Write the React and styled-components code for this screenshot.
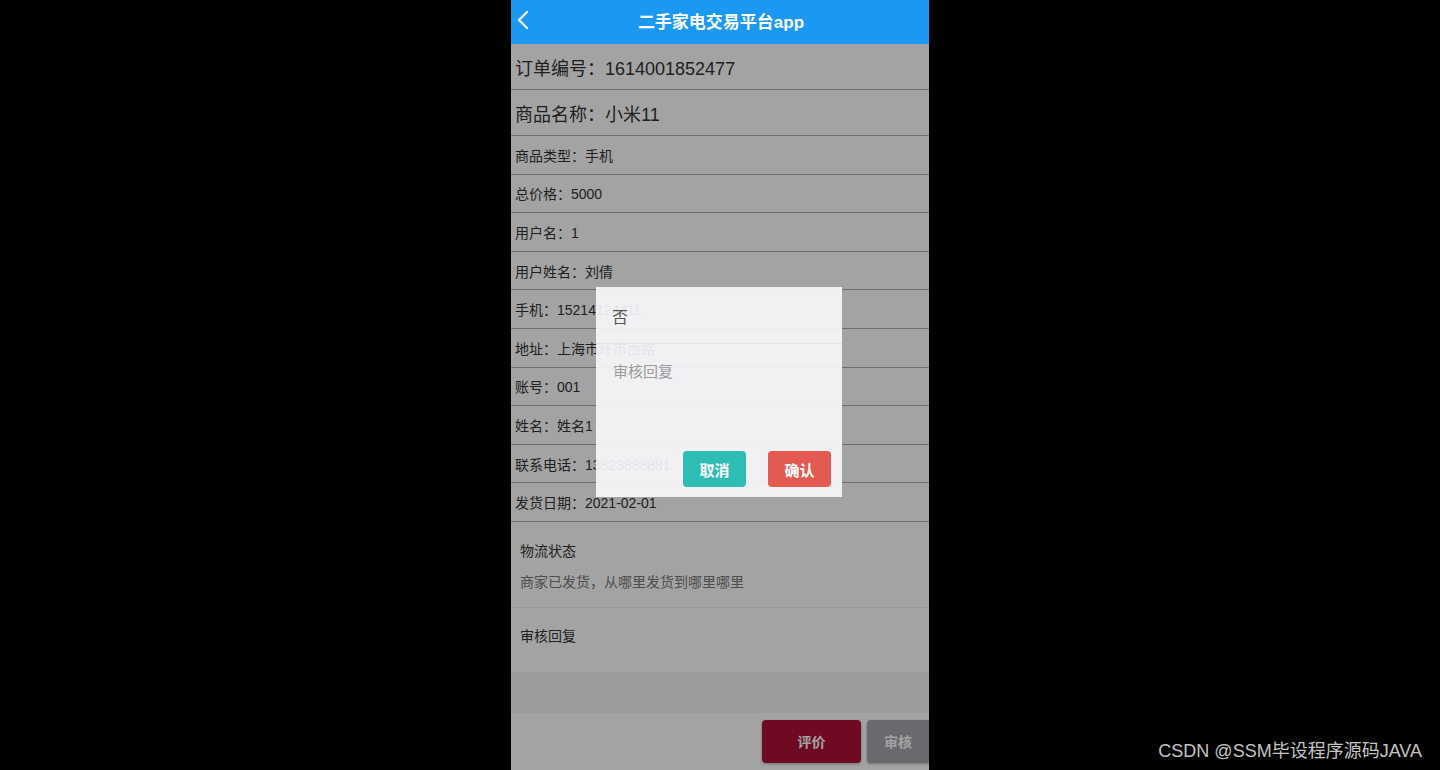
import React from 'react'
import styled, { createGlobalStyle } from 'styled-components'

const GlobalStyle = createGlobalStyle`
  html, body {
    margin: 0;
    padding: 0;
    background: #000;
    font-family: "Liberation Sans", "Noto Sans CJK SC", sans-serif;
  }
  * { box-sizing: border-box; }
`

const rows = [
  { label: '商品类型', value: '手机' },
  { label: '总价格', value: '5000' },
  { label: '用户名', value: '1' },
  { label: '用户姓名', value: '刘倩' },
  { label: '手机', value: '15214124411' },
  { label: '地址', value: '上海市环市西路' },
  { label: '账号', value: '001' },
  { label: '姓名', value: '姓名1' },
  { label: '联系电话', value: '13823888881' },
  { label: '发货日期', value: '2021-02-01' },
]

const App = () => {
  return (
    <Screen>
      <GlobalStyle />
      <Phone>
        <Header>
          <Back>
            <svg width="14" height="20" viewBox="0 0 14 20">
              <path d="M11 2 L3 10 L11 18" fill="none" stroke="#fff" strokeWidth="2.2" strokeLinecap="round" strokeLinejoin="round" />
            </svg>
          </Back>
          <Title>二手家电交易平台app</Title>
        </Header>
        <Body>
          <Content>
            <Row big>订单编号：1614001852477</Row>
            <Row big>商品名称：小米11</Row>
            {rows.map(r => (
              <Row key={r.label}>{r.label}：{r.value}</Row>
            ))}
            <Block>
              <BlockTitle>物流状态</BlockTitle>
              <BlockText>商家已发货，从哪里发货到哪里哪里</BlockText>
            </Block>
            <ReplyBlock>
              <BlockTitle>审核回复</BlockTitle>
            </ReplyBlock>
            <Band />
            <BottomBar>
              <ActionButton tone="#ac1135">评价</ActionButton>
              <ActionButton tone="#a6a4ac" cut>审核</ActionButton>
            </BottomBar>
          </Content>
          <Overlay />
          <Dialog>
            <DialogChoice>否</DialogChoice>
            <DialogArea>审核回复</DialogArea>
            <DialogActions>
              <DialogButton tone="#2ebdb4">取消</DialogButton>
              <DialogButton tone="#e25a51">确认</DialogButton>
            </DialogActions>
          </Dialog>
        </Body>
      </Phone>
      <Watermark>CSDN @SSM毕设程序源码JAVA</Watermark>
    </Screen>
  )
}

export default App

const Screen = styled.div`
  width: 1440px;
  height: 770px;
  background: #000;
  display: flex;
  justify-content: center;
  position: relative;
  overflow: hidden;
`
const Phone = styled.div`
  width: 418px;
  height: 770px;
  background: #fff;
  display: flex;
  flex-direction: column;
  overflow: hidden;
`
const Header = styled.div`
  height: 44px;
  flex-shrink: 0;
  background: #1a98f2;
  display: flex;
  align-items: center;
  justify-content: center;
  padding-bottom: 4px;
  position: relative;
`
const Back = styled.div`
  position: absolute;
  left: 5px;
  top: 10px;
  display: flex;
`
const Title = styled.div`
  color: #fff;
  font-size: 17px;
  font-weight: bold;
  margin-left: 2px;
`
const Body = styled.div`
  flex: 1;
  position: relative;
`
const Content = styled.div`
  display: flex;
  flex-direction: column;
  height: 100%;
`
const Row = styled.div`
  height: ${p => (p.big ? '46px' : '38.6px')};
  border-bottom: 1px solid #adadad;
  display: flex;
  align-items: center;
  padding-left: 4px;
  font-size: ${p => (p.big ? '18px' : '14px')};
  color: #333;
`
const Block = styled.div`
  height: 86px;
  padding: 20px 9px 0;
  border-bottom: 1px solid #ececec;
`
const ReplyBlock = styled.div`
  height: 64px;
  padding: 19px 9px 0;
`
const BlockTitle = styled.div`
  font-size: 14px;
  color: #333;
  line-height: 18px;
`
const BlockText = styled.div`
  font-size: 14px;
  color: #7a7a7a;
  line-height: 18px;
  margin-top: 13px;
`
const Band = styled.div`
  height: 41px;
  background: #f5f4f7;
`
const BottomBar = styled.div`
  flex: 1;
  display: flex;
  justify-content: flex-end;
  align-items: flex-start;
  gap: 6px;
  padding-top: 7px;
`
const ActionButton = styled.div`
  width: ${p => (p.cut ? '62px' : '99px')};
  height: 43px;
  background: ${p => p.tone};
  border-radius: ${p => (p.cut ? '4px 0 0 4px' : '4px')};
  color: #fff;
  font-size: 14px;
  font-weight: bold;
  display: flex;
  align-items: center;
  justify-content: center;
  box-shadow: 0 1px 3px rgba(0, 0, 0, 0.3);
`
const Overlay = styled.div`
  position: absolute;
  inset: 0;
  background: rgba(0, 0, 0, 0.36);
`
const Dialog = styled.div`
  position: absolute;
  left: 85px;
  top: 243px;
  width: 246px;
  height: 210px;
  background: rgba(250, 250, 253, 0.9);
  display: flex;
  flex-direction: column;
`
const DialogChoice = styled.div`
  height: 57px;
  border-bottom: 1px solid #e2e2e4;
  padding: 17px 0 0 16px;
  font-size: 16px;
  color: #555;
`
const DialogArea = styled.div`
  flex: 1;
  padding: 16px 0 0 17px;
  font-size: 15px;
  color: #9a9a9a;
`
const DialogActions = styled.div`
  display: flex;
  justify-content: flex-end;
  gap: 22px;
  padding: 0 11px 10px 0;
`
const DialogButton = styled.div`
  width: 63px;
  height: 36px;
  border-radius: 4px;
  background: ${p => p.tone};
  color: #fff;
  font-size: 15px;
  font-weight: bold;
  display: flex;
  align-items: center;
  justify-content: center;
`
const Watermark = styled.div`
  position: absolute;
  right: 18px;
  bottom: 8px;
  color: #c4c4c4;
  font-size: 18px;
`
